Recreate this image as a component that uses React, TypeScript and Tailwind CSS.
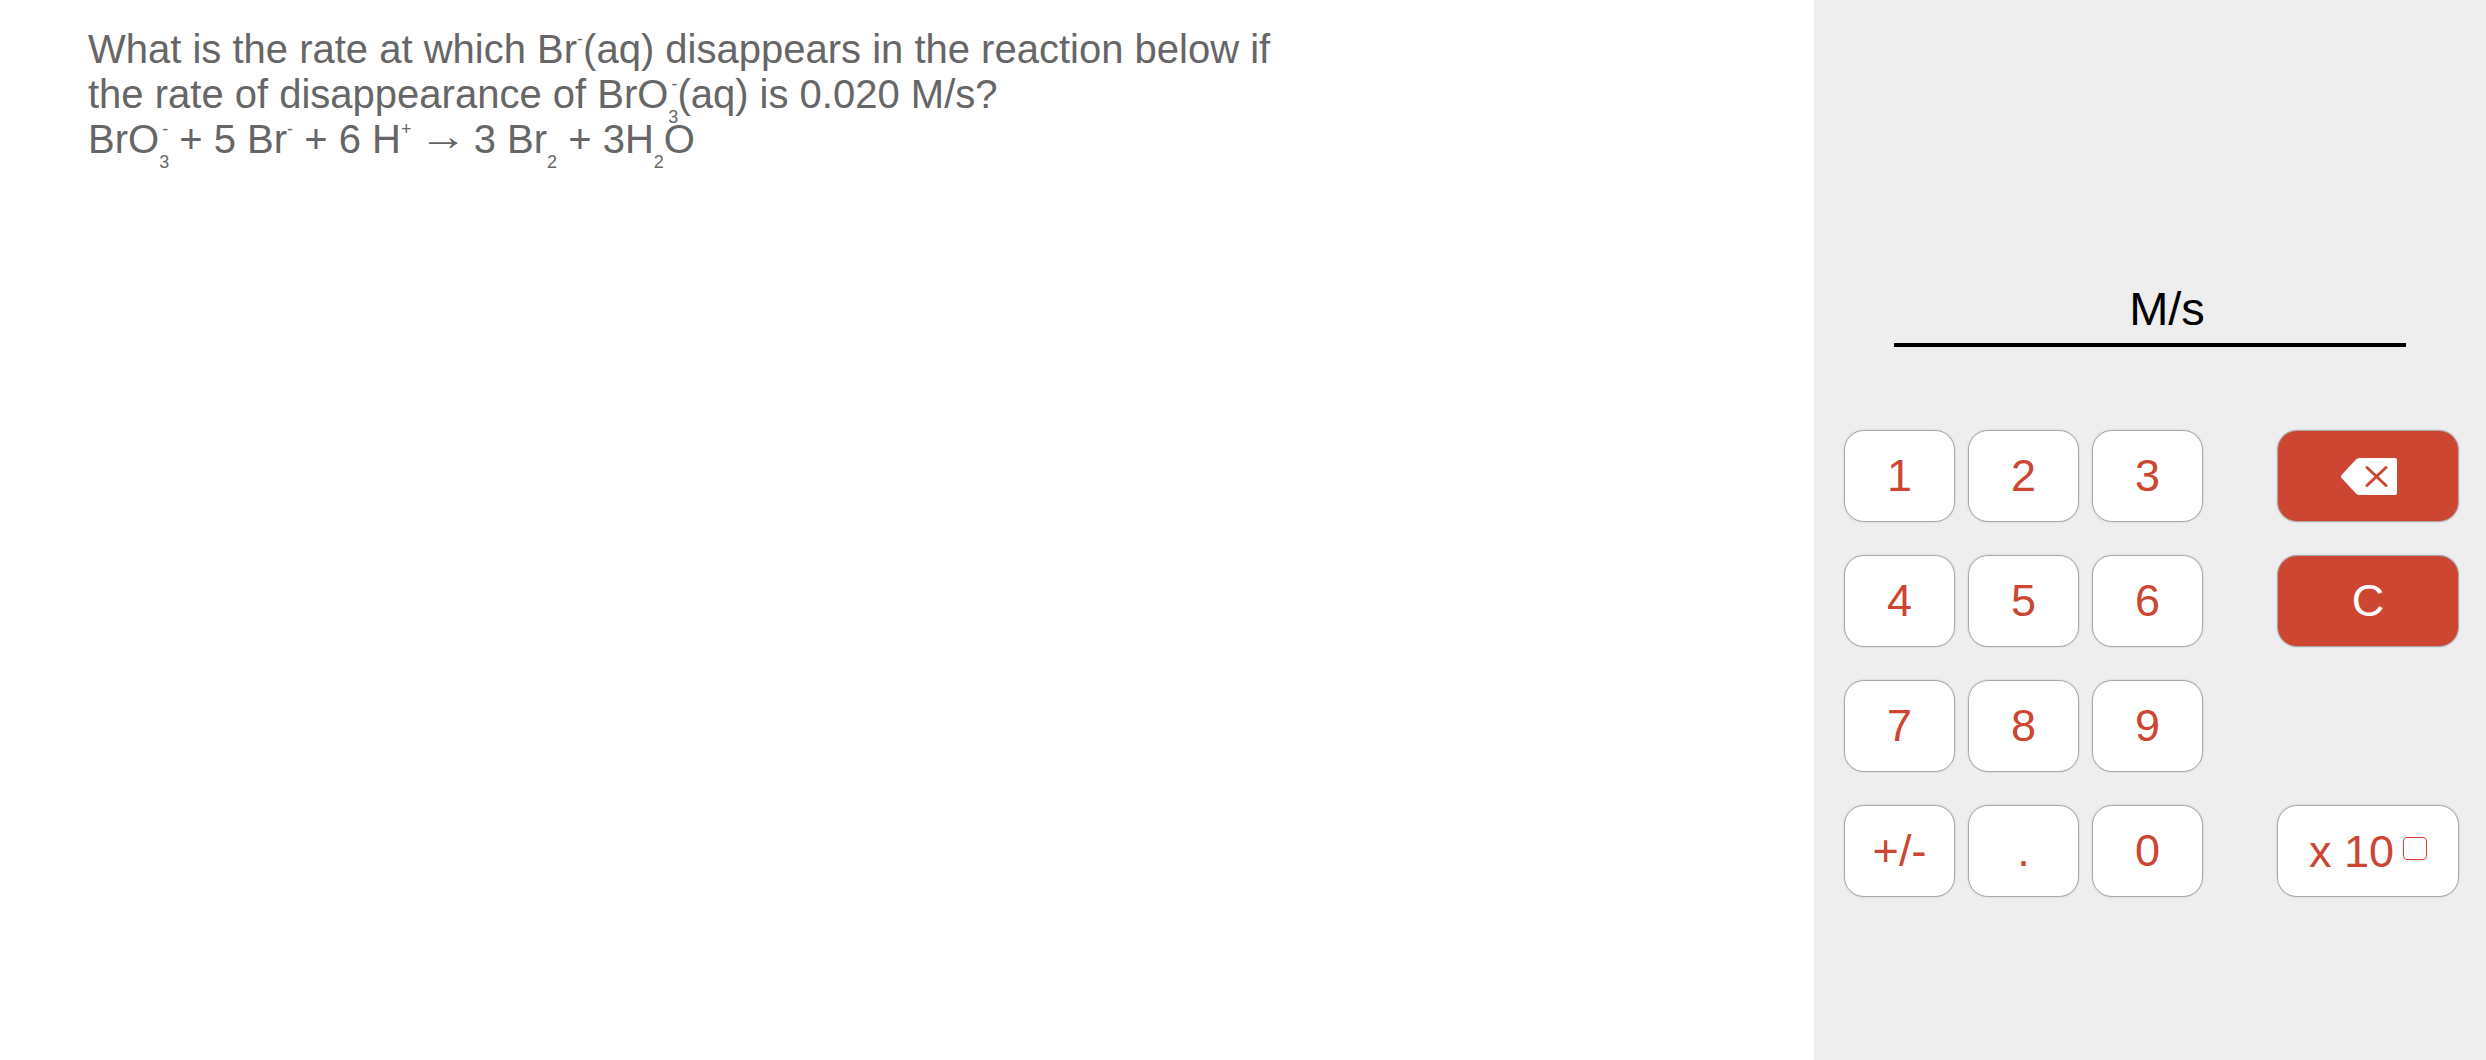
import React from "react";

const KEY =
  "flex items-center justify-center rounded-[20px] border border-[#a9a9a9] shadow-[0_0_2px_rgba(0,0,0,0.18)] text-[45px] h-[92px]";
const DIGIT = `${KEY} bg-white text-[#cc4631]`;
const RED = `${KEY} bg-[#cc4631] text-white`;

// small stacked sub/sup used in the chemistry text
function Sub({ children }: { children: React.ReactNode }) {
  return <sub className="relative top-[15px] text-[18px] leading-none align-baseline">{children}</sub>;
}

function Sup({ children, stacked }: { children: React.ReactNode; stacked?: boolean }) {
  return (
    <sup
      className={`relative -top-[18px] text-[18px] leading-none align-baseline ${stacked ? "-ml-[7px]" : ""}`}
    >
      {children}
    </sup>
  );
}

function Backspace() {
  return (
    <svg width="57" height="37" viewBox="0 0 57 37" aria-hidden="true">
      <path
        d="M2 20.5 Q0 18.5 2 16.5 L16 1.5 Q17.5 0 19.5 0 L55 0 Q57 0 57 2 L57 35 Q57 37 55 37 L19.5 37 Q17.5 37 16 35.5 Z"
        fill="#fff"
      />
      <path d="M27 9.5 L46 27.5 M46 9.5 L27 27.5" stroke="#cc4631" strokeWidth="3" strokeLinecap="round" />
    </svg>
  );
}

export default function App() {
  const rows = [
    ["1", "2", "3"],
    ["4", "5", "6"],
    ["7", "8", "9"],
    ["+/-", ".", "0"],
  ];

  return (
    <div className="flex h-[1060px] w-full font-['Liberation_Sans',Arial,sans-serif]">
      <div className="flex-1 bg-white pl-[88px] pt-[27px]">
        <p className="whitespace-nowrap text-[40px] leading-[45px] text-[#666666]">
          What is the rate at which Br<Sup>-</Sup>(aq) disappears in the reaction below if
          <br />
          the rate of disappearance of BrO<Sub>3</Sub>
          <Sup stacked>-</Sup>(aq) is 0.020 M/s?
          <br />
          BrO<Sub>3</Sub>
          <Sup stacked>-</Sup> + 5 Br<Sup>-</Sup> + 6 H<Sup>+</Sup>{" "}
          <span className="relative -top-[3px] inline-block scale-x-[1.2]">→</span> 3 Br<Sub>2</Sub> + 3H
          <Sub>2</Sub>O
        </p>
      </div>

      <div className="w-[672px] bg-[#eeeeee] pt-[281px]">
        <div className="mx-auto w-[512px]">
          <div className="h-[56px] pl-[34px] text-center text-[47px] leading-[56px] text-black">M/s</div>
          <div className="mt-[6px] h-[4px] bg-black" />
        </div>

        <div className="ml-[30px] mt-[83px] grid grid-cols-[111px_111px_111px_48px_182px] gap-x-[13px] gap-y-[33px]">
          {rows.map((row, i) => (
            <React.Fragment key={i}>
              {row.map((k) => (
                <button key={k} type="button" className={DIGIT}>
                  {k}
                </button>
              ))}
              <div />
              {i === 0 && (
                <button type="button" className={RED}>
                  <Backspace />
                </button>
              )}
              {i === 1 && (
                <button type="button" className={RED}>
                  C
                </button>
              )}
              {i === 2 && <div />}
              {i === 3 && (
                <button type="button" className={DIGIT}>
                  <span className="flex items-start">
                    <span className="leading-[33px]">x 10</span>
                    <span className="ml-[9px] mt-[2px] inline-block h-[23px] w-[24px] rounded-[4px] border border-[#dd3f2e]" />
                  </span>
                </button>
              )}
            </React.Fragment>
          ))}
        </div>
      </div>
    </div>
  );
}
